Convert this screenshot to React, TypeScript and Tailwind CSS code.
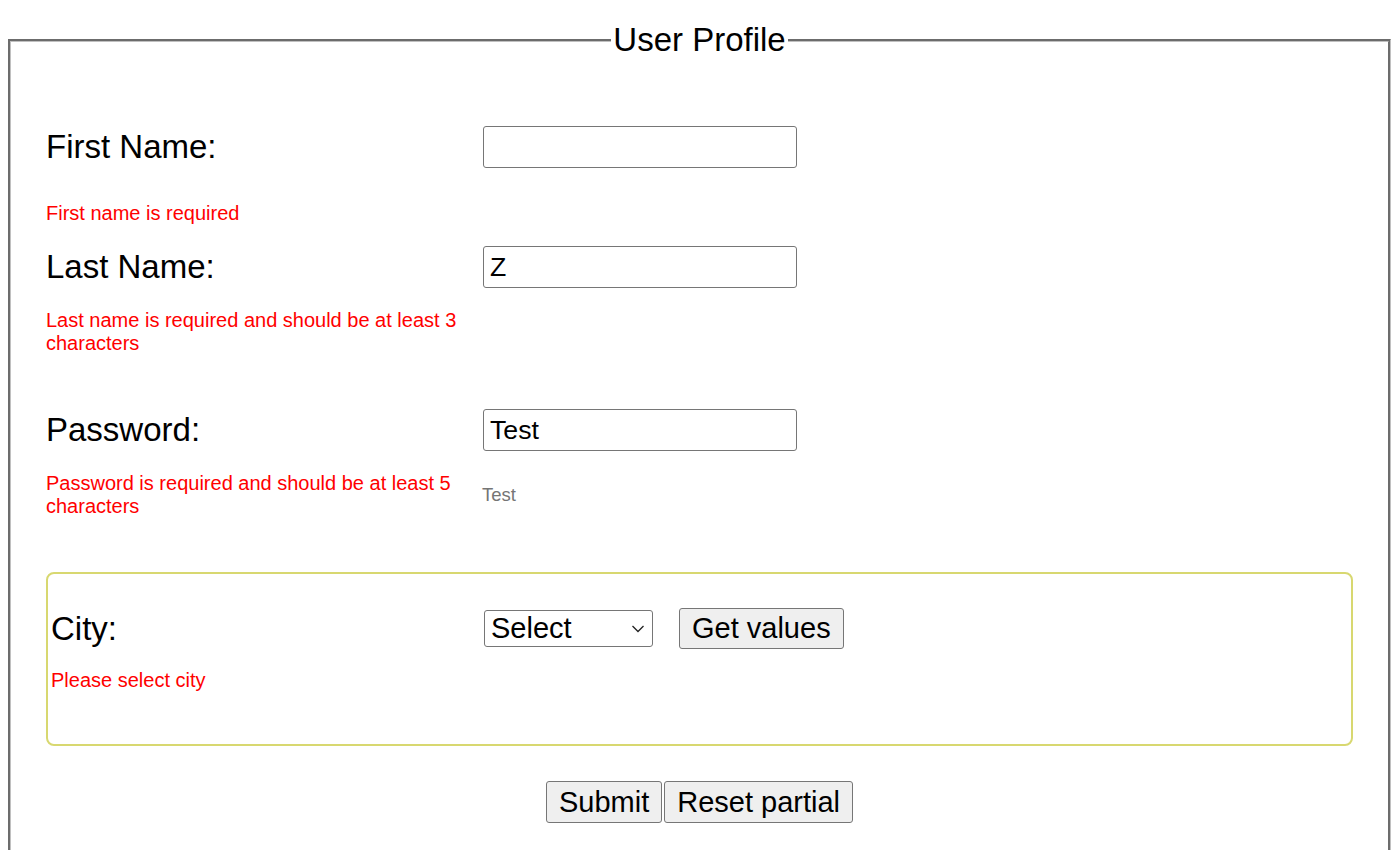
import { useState } from "react";

const font = "font-['Liberation_Sans',Arial,sans-serif]";

function Chevron() {
  return (
    <svg className="pointer-events-none absolute right-[8px] top-1/2 -translate-y-1/2" width="14" height="9" viewBox="0 0 14 9" fill="none">
      <path d="M1.5 1.5 L7 7 L12.5 1.5" stroke="#222" strokeWidth="1.3" />
    </svg>
  );
}

export default function App() {
  const [first, setFirst] = useState("");
  const [last, setLast] = useState("Z");
  const [pass, setPass] = useState("Test");

  return (
    <div className={`${font} min-h-[850px] bg-white text-black`}>
      <fieldset className="ml-[8px] mr-[9px] mt-[21px] border-[3px] border-[#c0c0c0] [border-style:groove] px-[35px] pb-[40px] pt-0">
        <legend className="mx-auto px-[2px] text-[33px] leading-[38px]">User Profile</legend>

        <div className="mt-[67px] flex h-[42px] items-center">
          <label className="w-[437px] shrink-0 text-[33px] leading-[38px]">First Name:</label>
          <input
            value={first}
            onChange={(e) => setFirst(e.target.value)}
            className="h-[42px] w-[314px] rounded-[3px] border border-[#767676] px-[6px] text-[26.7px] outline-none"
          />
        </div>
        <div className="mt-[34px] w-[437px] text-[20px] leading-[23px] text-[#ff0000]">First name is required</div>

        <div className="mt-[21px] flex h-[42px] items-center">
          <label className="w-[437px] shrink-0 text-[33px] leading-[38px]">Last Name:</label>
          <input
            value={last}
            onChange={(e) => setLast(e.target.value)}
            className="h-[42px] w-[314px] rounded-[3px] border border-[#767676] px-[6px] text-[26.7px] outline-none"
          />
        </div>
        <div className="mt-[21px] w-[437px] text-[20px] leading-[23px] text-[#ff0000]">
          Last name is required and should be at least 3 characters
        </div>

        <div className="mt-[54px] flex h-[42px] items-center">
          <label className="w-[437px] shrink-0 text-[33px] leading-[38px]">Password:</label>
          <input
            value={pass}
            onChange={(e) => setPass(e.target.value)}
            className="h-[42px] w-[314px] rounded-[3px] border border-[#767676] px-[6px] text-[26.7px] outline-none"
          />
        </div>
        <div className="mt-[21px] flex items-center">
          <div className="w-[437px] shrink-0 text-[20px] leading-[23px] text-[#ff0000]">
            Password is required and should be at least 5 characters
          </div>
          <span className="-ml-[1px] text-[18.5px] leading-[22px] text-[#757575]">{pass}</span>
        </div>

        <div className="mt-[54px] rounded-[8px] border-2 border-[#d8d870] pb-[52px] pl-[3px] pt-[34px]">
          <div className="flex h-[41px] items-center">
            <label className="w-[433px] shrink-0 text-[33px] leading-[38px]">City:</label>
            <div className="relative">
              <select
                defaultValue=""
                className="h-[37px] w-[169px] appearance-none rounded-[3px] border border-[#767676] bg-white pl-[6px] text-[29px] leading-[33px] outline-none"
              >
                <option value="">Select</option>
                <option value="ny">New York</option>
                <option value="la">Los Angeles</option>
              </select>
              <Chevron />
            </div>
            <button className="ml-[26px] h-[41px] rounded-[3px] border border-[#767676] bg-[#efefef] px-[12px] text-[29px] leading-[33px]">
              Get values
            </button>
          </div>
          <div className="mt-[20px] text-[20px] leading-[23px] text-[#ff0000]">Please select city</div>
        </div>

        <div className="mt-[35px] flex justify-center gap-[2px]">
          <button className="h-[42px] rounded-[3px] border border-[#767676] bg-[#efefef] px-[12px] text-[29px] leading-[33px]">
            Submit
          </button>
          <button className="h-[42px] rounded-[3px] border border-[#767676] bg-[#efefef] px-[12px] text-[29px] leading-[33px]">
            Reset partial
          </button>
        </div>
      </fieldset>
    </div>
  );
}
